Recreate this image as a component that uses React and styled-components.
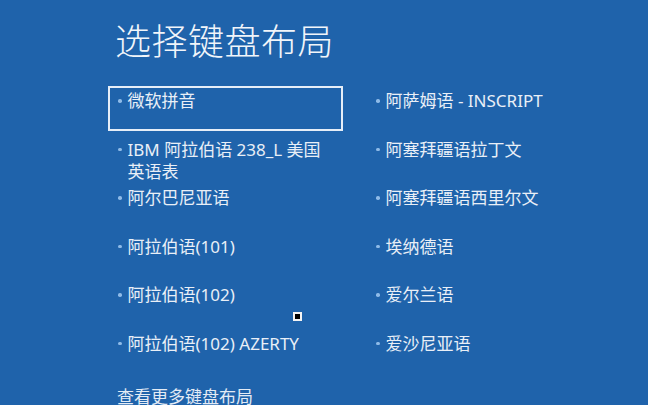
import React from 'react';
import styled, { createGlobalStyle } from 'styled-components';

const GlobalStyle = createGlobalStyle`
  html, body {
    margin: 0;
    padding: 0;
    height: 100%;
    overflow: hidden;
    background: #1f63ab;
  }
  #root {
    height: 100%;
  }
`;

const Screen = styled.div`
  position: relative;
  height: 405px;
  padding: 19px 0 0 108px;
  box-sizing: border-box;
  font-family: "Noto Sans", "Noto Sans CJK SC", sans-serif;
  color: #e9eff7;
`;

const Title = styled.h1`
  margin: 0 0 0 7px;
  font-size: 36px;
  font-weight: 300;
  line-height: 45px;
  letter-spacing: 0.5px;
  color: #f1f5fa;
`;

const LayoutGrid = styled.div`
  display: grid;
  grid-template-columns: repeat(2, 235px);
  grid-auto-rows: 45px;
  column-gap: 23px;
  row-gap: 3.5px;
  margin-top: 22px;
`;

const Option = styled.div`
  box-sizing: border-box;
  display: flex;
  align-items: flex-start;
  gap: 6px;
  padding: 2px 14px 0 8px;
  border: 2px solid ${(p) => (p.$focused ? '#e6eef8' : 'transparent')};
  font-size: 17px;
  line-height: 22px;
`;

const Bullet = styled.span`
  flex: none;
  width: 3.5px;
  height: 3.5px;
  margin-top: 9px;
  border-radius: 50%;
  background: #8fbbe8;
`;

const Label = styled.span`
  flex: 1;
`;

const MoreLink = styled.div`
  margin: 12px 0 0 9px;
  font-size: 17px;
  line-height: 22px;
  color: #e3ebf5;
`;

const Cursor = styled.div`
  position: absolute;
  left: 293px;
  top: 312px;
  width: 5px;
  height: 5px;
  background: #000;
  border: 2px solid #f4f4f4;
`;

const options = [
  { label: '微软拼音', focused: true },
  { label: '阿萨姆语 - INSCRIPT' },
  { label: <>IBM 阿拉伯语 238_L 美国<br />英语表</> },
  { label: '阿塞拜疆语拉丁文' },
  { label: '阿尔巴尼亚语' },
  { label: '阿塞拜疆语西里尔文' },
  { label: '阿拉伯语(101)' },
  { label: '埃纳德语' },
  { label: '阿拉伯语(102)' },
  { label: '爱尔兰语' },
  { label: '阿拉伯语(102) AZERTY' },
  { label: '爱沙尼亚语' },
];

export default function App() {
  return (
    <>
      <GlobalStyle />
      <Screen>
        <Title>选择键盘布局</Title>
        <LayoutGrid>
          {options.map((o, i) => (
            <Option key={i} $focused={o.focused}>
              <Bullet />
              <Label>{o.label}</Label>
            </Option>
          ))}
        </LayoutGrid>
        <MoreLink>查看更多键盘布局</MoreLink>
        <Cursor />
      </Screen>
    </>
  );
}
